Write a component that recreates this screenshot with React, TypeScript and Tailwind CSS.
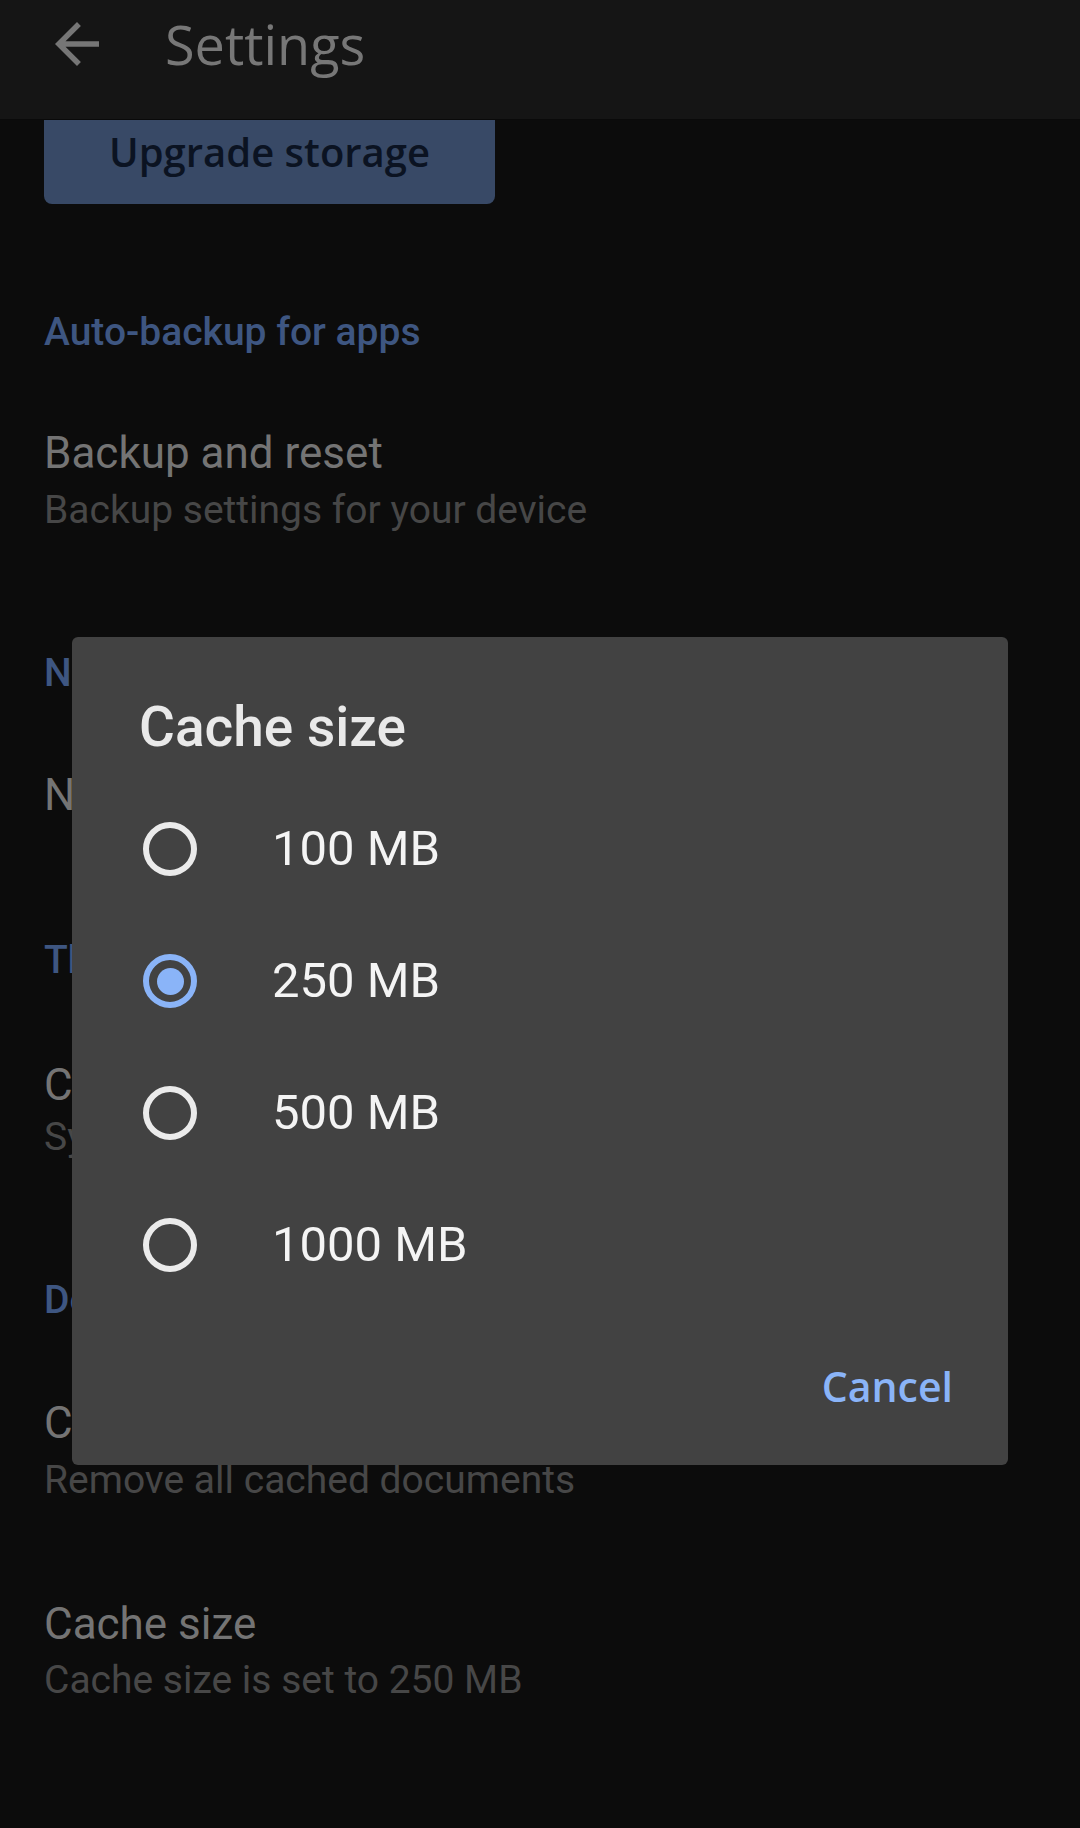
import React from "react";

const Radio = ({ checked }: { checked?: boolean }) =>
  checked ? (
    <div className="w-[54px] h-[54px] rounded-full border-[6px] border-[#8ab4f8] flex items-center justify-center shrink-0">
      <div className="w-[27px] h-[27px] rounded-full bg-[#8ab4f8]" />
    </div>
  ) : (
    <div className="w-[54px] h-[54px] rounded-full border-[6px] border-[#ebebeb] shrink-0" />
  );

const options = [
  { label: "100 MB", checked: false },
  { label: "250 MB", checked: true },
  { label: "500 MB", checked: false },
  { label: "1000 MB", checked: false },
];

export default function App() {
  return (
    <div className="relative w-[1080px] h-[1828px] bg-[#0c0c0c] overflow-hidden font-['Roboto',sans-serif]">
      {/* Header */}
      <div className="relative z-10 h-[120px] bg-[#151515] border-b border-[#0a0a0a]">
        <div className="h-[88px] flex items-center">
          <svg className="ml-[44px] w-[66px] h-[66px]" viewBox="0 0 24 24" fill="#767676">
            <path d="M20 11H7.83l5.59-5.59L12 4l-8 8 8 8 1.41-1.41L7.83 13H20v-2z" />
          </svg>
          <div className="ml-[55px] font-['Open_Sans',sans-serif] text-[54px] leading-[64px] text-[#777777]">
            Settings
          </div>
        </div>
      </div>

      {/* Content */}
      <div className="flex flex-col pl-[44px]">
        <div className="-mt-[20px] w-[451px] h-[104px] rounded-[8px] bg-[#384966] flex items-center justify-center font-['Open_Sans',sans-serif] font-semibold text-[40px] text-[#0b1322]">
          Upgrade storage
        </div>

        <div className="mt-[102px] leading-[52px] text-[39px] font-medium text-[#3e5681]">Auto-backup for apps</div>
        <div className="mt-[69px] leading-[52px] text-[44px] text-[#747474]">Backup and reset</div>
        <div className="mt-[5px] leading-[52px] text-[39px] text-[#474747]">Backup settings for your device</div>

        <div className="mt-[111px] leading-[52px] text-[39px] font-medium text-[#3e5681]">Notifications</div>
        <div className="mt-[70px] leading-[52px] text-[44px] text-[#747474]">Notification settings</div>

        <div className="mt-[113px] leading-[52px] text-[39px] font-medium text-[#3e5681]">Theme</div>
        <div className="mt-[73px] leading-[52px] text-[44px] text-[#747474]">Choose theme</div>
        <div className="mt-0 leading-[52px] text-[39px] text-[#474747]">System default</div>

        <div className="mt-[111px] leading-[52px] text-[39px] font-medium text-[#3e5681]">Documents cache</div>
        <div className="mt-[71px] leading-[52px] text-[44px] text-[#747474]">Clear cache</div>
        <div className="mt-[5px] leading-[52px] text-[39px] text-[#474747]">Remove all cached documents</div>

        <div className="mt-[92px] leading-[52px] text-[44px] text-[#747474]">Cache size</div>
        <div className="mt-[4px] leading-[52px] text-[39px] text-[#474747]">Cache size is set to 250 MB</div>
      </div>

      {/* Dialog */}
      <div className="absolute z-20 left-[72px] top-[637px] w-[936px] h-[828px] bg-[#424242] rounded-[6px] flex flex-col">
        <div className="pt-[58px] pl-[67px] leading-[64px] text-[55px] font-medium text-[#e9e9e9]">
          Cache size
        </div>
        <div className="mt-[24px] flex flex-col">
          {options.map((o) => (
            <div key={o.label} className="h-[132px] flex items-center pl-[71px]">
              <Radio checked={o.checked} />
              <div className="ml-[75px] text-[49px] leading-[60px] text-[#f4f4f4]">{o.label}</div>
            </div>
          ))}
        </div>
        <div className="mt-[49px] flex justify-end pr-[55px]">
          <div className="font-['Open_Sans',sans-serif] font-semibold text-[41px] leading-[52px] text-[#8ab4f8]">
            Cancel
          </div>
        </div>
      </div>
    </div>
  );
}
